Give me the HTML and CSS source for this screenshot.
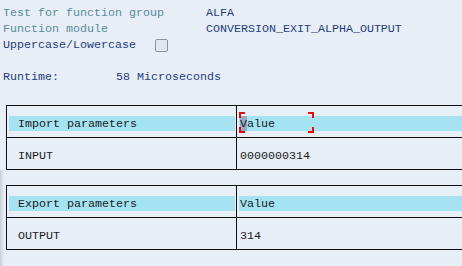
FILE: index.html
```html
<!DOCTYPE html>
<html lang="en">
  <head>
    <meta charset="UTF-8">
    <title>Test Function Module</title>
    <link rel="stylesheet" href="styles.css">
  </head>
  <body>
    <section class="header">
      <div class="field">
        <span class="field__label field__label--muted">Test for function group</span>
        <span class="field__value">ALFA</span>
      </div>
      <div class="field">
        <span class="field__label field__label--muted">Function module</span>
        <span class="field__value">CONVERSION_EXIT_ALPHA_OUTPUT</span>
      </div>
      <div class="field">
        <span class="field__text">Uppercase/Lowercase</span>
        <span class="checkbox" role="checkbox" aria-checked="false"></span>
      </div>
      <div class="field field--spaced">
        <span class="field__runtime">Runtime:</span>
        <span class="field__text">58 Microseconds</span>
      </div>
    </section>

    <section class="params params--first" aria-label="Import parameters">
      <div class="params__cell">
        <span class="params__text params__text--head">Import parameters</span>
      </div>
      <div class="params__cell params__cell--value">
        <span class="params__text params__text--head params__text--value"><span class="cursor">V</span>alue</span>
        <span class="focus-box" aria-hidden="true"></span>
      </div>
      <div class="params__cell params__cell--row">
        <span class="params__text">INPUT</span>
      </div>
      <div class="params__cell params__cell--value params__cell--row">
        <span class="params__text params__text--value">0000000314</span>
      </div>
    </section>

    <section class="params" aria-label="Export parameters">
      <div class="params__cell">
        <span class="params__text params__text--head">Export parameters</span>
      </div>
      <div class="params__cell params__cell--value">
        <span class="params__text params__text--head params__text--value">Value</span>
      </div>
      <div class="params__cell params__cell--row">
        <span class="params__text">OUTPUT</span>
      </div>
      <div class="params__cell params__cell--value params__cell--row">
        <span class="params__text params__text--value">314</span>
      </div>
    </section>
  </body>
</html>
```

FILE: styles.css
```css
:root {
  --swatch-bg: #e8eef6;
  --swatch-band: #a5e3f3;
  --swatch-line: #111;
  --swatch-text: #1c1c1c;
  --swatch-blue: #1f3d80;
  --swatch-muted: #5a8c9e;
  --swatch-focus: #e01010;
  --swatch-cursor: #93a9c6;

  --font-mono: "Liberation Mono", "Courier New", monospace;
}

*, *::before, *::after {
  box-sizing: border-box;
}

html, body {
  margin: 0;
  padding: 0;
  height: 100%;
}

body {
  position: relative;
  overflow: hidden;
  padding: 5px 0 0 3px;
  background-color: var(--swatch-bg);
  font-family: var(--font-mono);
  font-size: 11.67px;
  line-height: 16px;
  color: var(--swatch-blue);
}

/* window edge shade along the lower left */
body::before {
  content: "";
  position: absolute;
  left: 0;
  top: 170px;
  bottom: 0;
  width: 4px;
  background: linear-gradient(to right, #c9cdd3, rgba(232, 238, 246, 0));
}

/** Header fields. */
.header {
  display: block;
}

.field {
  display: flex;
  align-items: center;
  height: 16px;
  white-space: pre;
}
.field--spaced {
  margin-top: 16px;
}

.field__label {
  width: 203px;
  flex: none;
}
.field__label--muted {
  color: var(--swatch-muted);
}

.field__value,
.field__text {
  color: var(--swatch-blue);
}

.field__runtime {
  width: 113px;
  flex: none;
}

.checkbox {
  display: block;
  width: 13px;
  height: 13px;
  margin: 0 0 0 19px;
  background-color: #dfe8f1;
  border: 1px solid #8b939c;
  border-radius: 2px;
}

/*
 * The tables run on past the right edge of the window, so there is no
 * right border to draw.
 */
.params {
  display: grid;
  grid-template-columns: 229px 1fr;
  margin: 15px 0 0 3px;
  border: 1px solid var(--swatch-line);
  border-right: 0;
  color: var(--swatch-text);
}
.params--first {
  margin-top: 20px;
}

.params__cell {
  position: relative;
  padding: 10px 1px 6px 2px;
}
.params__cell--value {
  border-left: 1px solid var(--swatch-line);
  padding-right: 0;
}
.params__cell--row {
  border-top: 1px solid var(--swatch-line);
}

.params__text {
  display: block;
  height: 15px;
  padding-left: 9px;
  line-height: 17px;
  white-space: pre;
}
.params__text--head {
  background-color: var(--swatch-band);
}
.params__text--value {
  padding-left: 1px;
}

.cursor {
  display: inline-block;
  height: 15px;
  background-color: var(--swatch-cursor);
}

/* red corner brackets of the focused header cell */
.focus-box {
  position: absolute;
  left: 2px;
  top: 6px;
  width: 75px;
  height: 21px;
  background:
    linear-gradient(var(--swatch-focus), var(--swatch-focus)) left top / 6px 2px no-repeat,
    linear-gradient(var(--swatch-focus), var(--swatch-focus)) left top / 2px 6px no-repeat,
    linear-gradient(var(--swatch-focus), var(--swatch-focus)) right top / 6px 2px no-repeat,
    linear-gradient(var(--swatch-focus), var(--swatch-focus)) right top / 2px 6px no-repeat,
    linear-gradient(var(--swatch-focus), var(--swatch-focus)) left bottom / 6px 2px no-repeat,
    linear-gradient(var(--swatch-focus), var(--swatch-focus)) left bottom / 2px 6px no-repeat,
    linear-gradient(var(--swatch-focus), var(--swatch-focus)) right bottom / 6px 2px no-repeat,
    linear-gradient(var(--swatch-focus), var(--swatch-focus)) right bottom / 2px 6px no-repeat;
}
```
